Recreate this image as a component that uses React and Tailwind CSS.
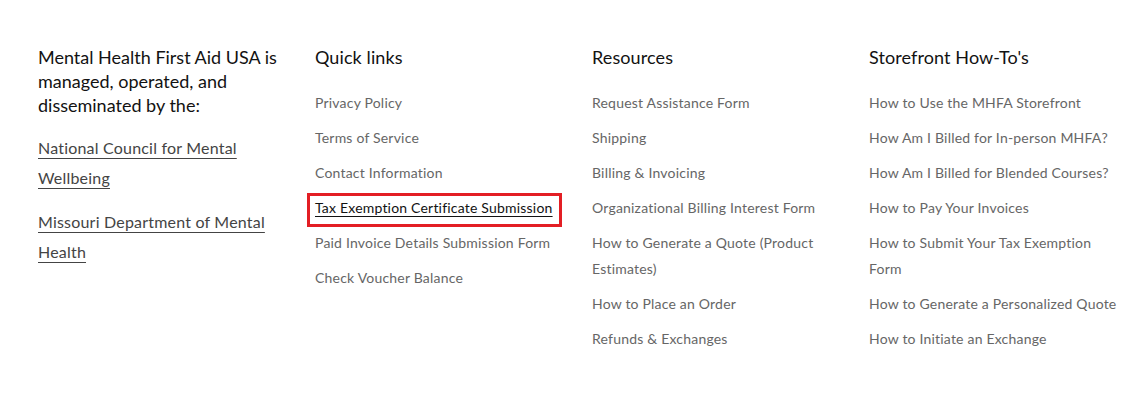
const quickLinks = [
  'Privacy Policy',
  'Terms of Service',
  'Contact Information',
  'Tax Exemption Certificate Submission',
  'Paid Invoice Details Submission Form',
  'Check Voucher Balance',
];

const resources = [
  'Request Assistance Form',
  'Shipping',
  'Billing & Invoicing',
  'Organizational Billing Interest Form',
  'How to Generate a Quote (Product Estimates)',
  'How to Place an Order',
  'Refunds & Exchanges',
];

const howTos = [
  'How to Use the MHFA Storefront',
  'How Am I Billed for In-person MHFA?',
  'How Am I Billed for Blended Courses?',
  'How to Pay Your Invoices',
  'How to Submit Your Tax Exemption Form',
  'How to Generate a Personalized Quote',
  'How to Initiate an Exchange',
];

const LinkColumn = ({ title, links, highlight }) => (
  <div>
    <h2 className="text-[18px] leading-[24px] text-[#121212] tracking-[0.1px]">{title}</h2>
    <ul className="mt-[16.5px]">
      {links.map((link) => (
        <li key={link} className="py-[4.5px] text-[14px] leading-[26px] tracking-[0.2px]">
          {link === highlight ? (
            <a href="#" className="relative inline-block whitespace-nowrap text-[#121212] underline underline-offset-[3px] decoration-1">
              {link}
              {/* annotation box */}
              <span className="absolute -left-[8px] -right-[9px] -top-[2px] -bottom-[6px] border-[3px] border-[#e31e24]" />
            </a>
          ) : (
            <a href="#" className="text-[#666666]">{link}</a>
          )}
        </li>
      ))}
    </ul>
  </div>
);

export default function App() {
  return (
    <div
      className="w-[1146px] h-[394px] bg-white pl-[38px] pt-[45px] grid grid-cols-[252px_252px_252px_252px] gap-x-[25px] items-start overflow-hidden"
      style={{ fontFamily: 'Lato, "Noto Sans", sans-serif' }}
    >
      <div className="pr-[10px]">
        <p className="text-[18px] leading-[24px] text-[#121212] tracking-[0px]">
          Mental Health First Aid USA is managed, operated, and disseminated by the:
        </p>
        <div className="mt-[16px] flex flex-col gap-[14px] text-[16px] leading-[30px] tracking-[0.2px]">
          <a href="#" className="text-[#444444] underline underline-offset-[4px] decoration-1">
            National Council for Mental Wellbeing
          </a>
          <a href="#" className="text-[#444444] underline underline-offset-[4px] decoration-1">
            Missouri Department of Mental Health
          </a>
        </div>
      </div>
      <LinkColumn title="Quick links" links={quickLinks} highlight="Tax Exemption Certificate Submission" />
      <LinkColumn title="Resources" links={resources} />
      <LinkColumn title="Storefront How-To's" links={howTos} />
    </div>
  );
}
